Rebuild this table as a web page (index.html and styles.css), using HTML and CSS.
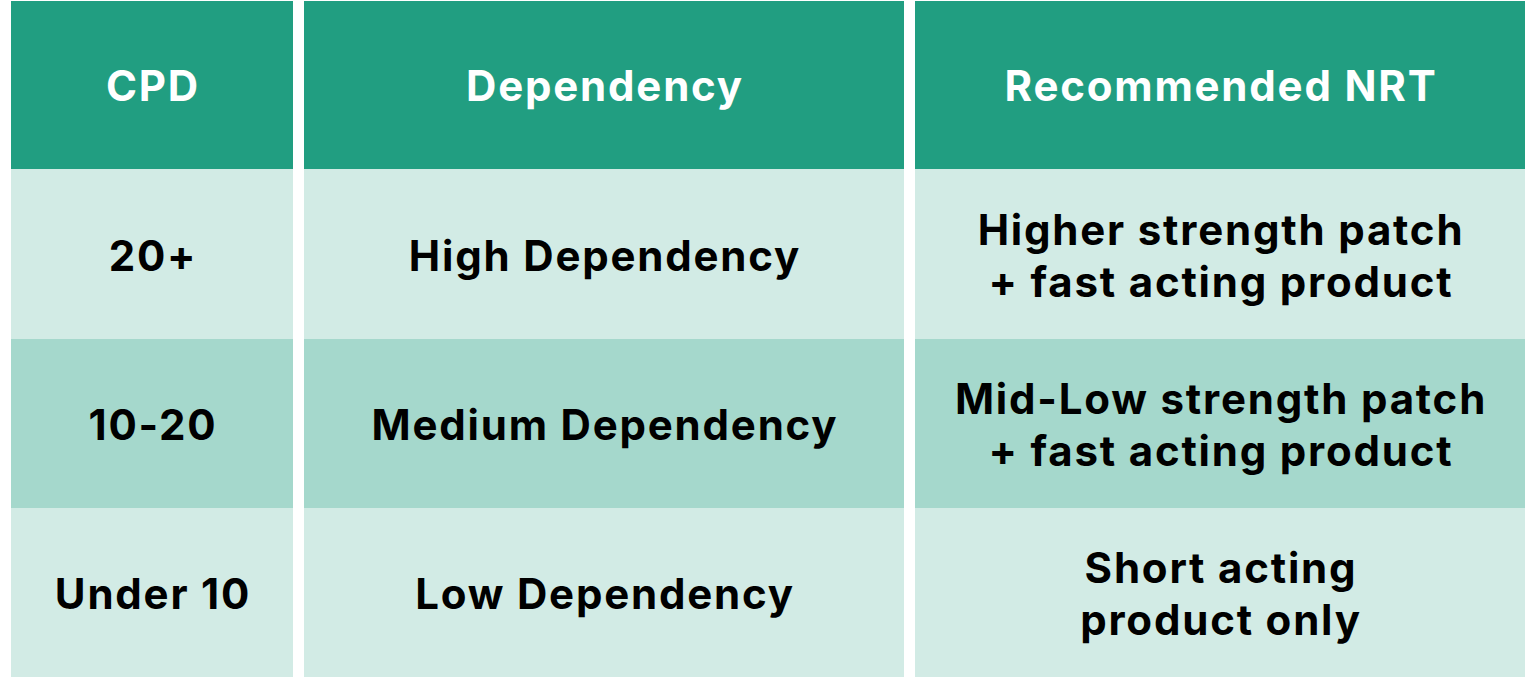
FILE: index.html
```html
<!DOCTYPE html>
<html lang="en">
<head>
<meta charset="utf-8">
<title>NRT table</title>
<link rel="stylesheet" href="styles.css">
</head>
<body>
<div class="table">
  <div class="cell head">CPD</div>
  <div class="cell head">Dependency</div>
  <div class="cell head">Recommended NRT</div>

  <div class="cell light">20+</div>
  <div class="cell light">High Dependency</div>
  <div class="cell light">Higher strength patch<br>+ fast acting product</div>

  <div class="cell mid">10-20</div>
  <div class="cell mid">Medium Dependency</div>
  <div class="cell mid">Mid-Low strength patch<br>+ fast acting product</div>

  <div class="cell light">Under 10</div>
  <div class="cell light">Low Dependency</div>
  <div class="cell light">Short acting<br>product only</div>
</div>
</body>
</html>
```

FILE: styles.css
```css
html, body {
  margin: 0;
  padding: 0;
  background: #ffffff;
}
body {
  width: 1536px;
  height: 678px;
  overflow: hidden;
}
.table {
  display: grid;
  grid-template-columns: 282px 600px 610px;
  grid-template-rows: 168px 170px 169px 169px;
  column-gap: 11px;
  padding: 1px 11px 0 11px;
  font-family: "Inter", "Liberation Sans", sans-serif;
  font-weight: 700;
  font-size: 42px;
  letter-spacing: 1.8px;
  line-height: 52px;
}
.cell {
  display: flex;
  align-items: center;
  justify-content: center;
  text-align: center;
  color: #000000;
  padding: 3px 0 0 2px;
}
.head {
  background: #219e81;
  color: #ffffff;
  padding-top: 2px;
}
.light {
  background: #d2ebe5;
}
.mid {
  background: #a5d8cc;
}
```
